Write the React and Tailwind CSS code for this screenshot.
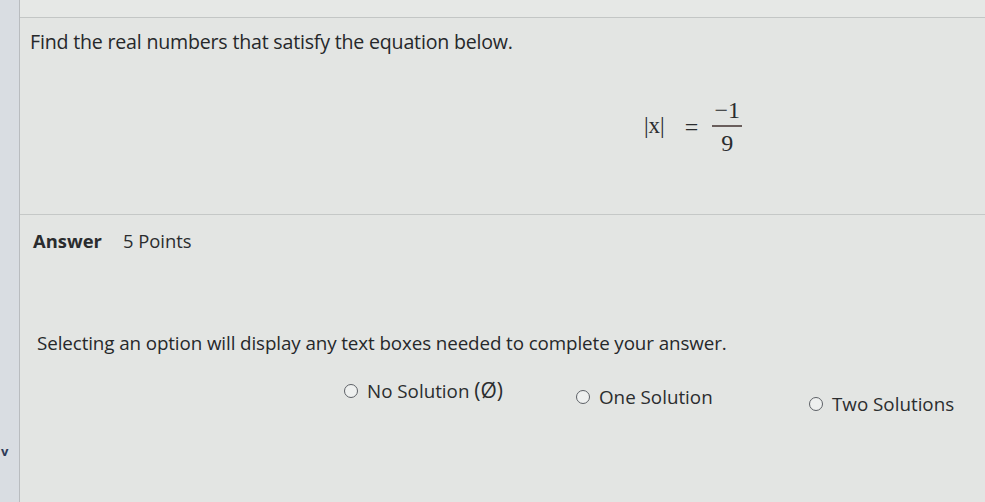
import React from 'react';

const Radio = ({ label, extra }) => (
    <label className="flex items-center gap-[9px] text-[18.8px] text-[#2b2d2f]">
        <span className="w-[14px] h-[14px] rounded-full border-[1.5px] border-[#5d6166] bg-[#eef0ef]"></span>
        <span>{label}{extra}</span>
    </label>
);

const App = () => {
    return (
        <div className="w-[985px] h-[502px] flex bg-[#e3e5e3] overflow-hidden" style={{ fontFamily: '"Open Sans", sans-serif' }}>
            {/* left rail */}
            <div className="w-[20px] flex-shrink-0 bg-[#d9dde2] border-r border-[#b9bcbf] flex flex-col">
                <div className="flex-1"></div>
                <div className="h-[60px] text-[#2e3a57] text-[13px] font-bold pl-[1px]">v</div>
            </div>

            <div className="flex-1 flex flex-col">
                <div className="h-[18px] border-b border-[#c3c6c5] bg-[#e6e8e6]"></div>

                {/* question */}
                <div className="h-[197px] border-b border-[#c5c8c7] pl-[10px] pt-[9px]">
                    <p className="text-[19.6px] text-[#26282a] tracking-[-0.2px]">
                        Find the real numbers that satisfy the equation below.
                    </p>
                    <div className="mt-[42px] ml-[614px] flex items-center text-[#2a2c2e]" style={{ fontFamily: '"Liberation Serif", serif' }}>
                        <span className="text-[23px]">|x|</span>
                        <span className="text-[24px] ml-[20px] mr-[14px]">=</span>
                        <span className="flex flex-col items-center leading-none">
                            <span className="text-[24px] px-[2px] pb-[3px]">−1</span>
                            <span className="w-[30px] h-[1.5px] bg-[#6a5e5c]"></span>
                            <span className="text-[24px] pt-[4px]">9</span>
                        </span>
                    </div>
                </div>

                {/* answer */}
                <div className="flex-1 pl-[13px] pt-[12px]">
                    <div className="flex items-baseline gap-[21px] text-[18.4px] text-[#2a2c2e]">
                        <span className="font-bold">Answer</span>
                        <span>5 Points</span>
                    </div>
                    <p className="mt-[74px] ml-[4px] text-[18.8px] text-[#26282a] tracking-[-0.1px]">
                        Selecting an option will display any text boxes needed to complete your answer.
                    </p>
                    <div className="mt-[18px] ml-[311px] flex items-start">
                        <div className="w-[232px]"><Radio label="No Solution " extra={<span className="text-[21px]">(Ø)</span>} /></div>
                        <div className="w-[233px] mt-[8px]"><Radio label="One Solution" /></div>
                        <div className="mt-[15px]"><Radio label="Two Solutions" /></div>
                    </div>
                </div>
            </div>
        </div>
    );
};

export default App;
